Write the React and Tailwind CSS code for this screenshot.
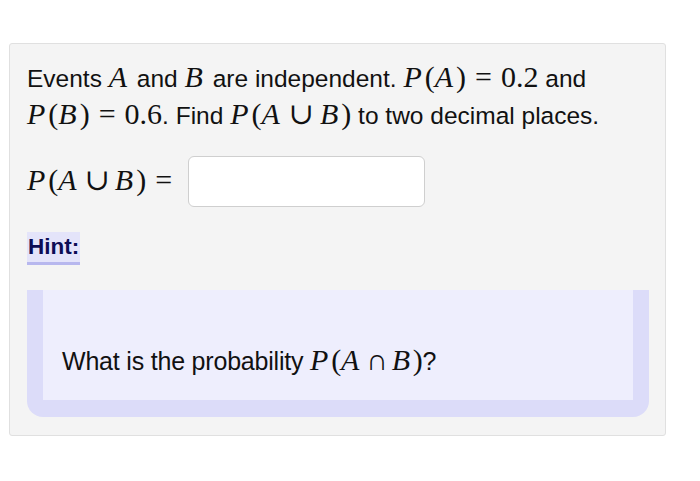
import React from 'react';

const serif = { fontFamily: '"Liberation Serif", "DejaVu Serif", serif' };

// math italic letter
const M = ({ children, s = 'text-[30px]' }) => (
  <span className={`italic pr-[3px] ${s}`} style={serif}>{children}</span>
);

// upright math (digits, parens)
const R = ({ children, s = 'text-[30px]' }) => (
  <span className={s} style={serif}>{children}</span>
);

// binary op / relation with spacing
const Op = ({ children, w = 'mx-[9px]', s = 'text-[30px]' }) => (
  <span className={`${s} ${w}`} style={serif}>{children}</span>
);

const App = () => {
  return (
    <div className="w-[700px] h-[481px] bg-white pt-[43px] pl-[9px]" style={{ fontFamily: '"Liberation Sans", Arial, sans-serif' }}>
      <div className="w-[657px] h-[393px] bg-[#f4f4f4] border border-[#e0e0e0] rounded-[3px] pl-[17px] pr-[16px] pt-[15px]">
        <p className="text-[24.5px] leading-[35px] text-[#111]">
          Events <M>A</M> and <M>B</M> are independent. <M>P</M><R>(</R><M>A</M><R>)</R><Op>=</Op><R>0.2</R> and
          <br />
          <M>P</M><R>(</R><M>B</M><R>)</R><Op>=</Op><R>0.6</R>. Find <M>P</M><R>(</R><M>A</M><Op w="mx-[6px]">∪</Op><M>B</M><R>)</R> to two decimal places.
        </p>

        <div className="flex items-center mt-[23px]">
          <span className="text-[#111] mr-[16px] leading-[35px]">
            <M>P</M><R>(</R><M>A</M><Op w="mx-[5px]">∪</Op><M>B</M><R>)</R><Op w="ml-[9px]">=</Op>
          </span>
          <div className="w-[237px] h-[51px] bg-white border border-[#cfcfcf] rounded-[6px]" />
        </div>

        <div className="mt-[25px]">
          <span className="inline-block bg-[#e4e4fa] border-b-[3px] border-[#b7b7ee] px-[1px] text-[22.5px] font-bold leading-[30px] text-[#0d0d55]">
            Hint:
          </span>
        </div>

        <div className="mt-[25px] w-[622px] bg-[#dcdcf9] rounded-b-[16px] px-[16px] pb-[17px]">
          <div className="bg-[#eeeefd] h-[110px] pl-[19px] pt-[55px]">
            <p className="text-[25px] tracking-[-0.2px] text-[#111] leading-[30px]">
              What is the probability <M s="text-[30px]">P</M><R s="text-[30px]">(</R><M s="text-[30px]">A</M><Op w="mx-[4px]" s="text-[30px]">∩</Op><M s="text-[30px]">B</M><R s="text-[30px]">)</R>?
            </p>
          </div>
        </div>
      </div>
    </div>
  );
};

export default App;
